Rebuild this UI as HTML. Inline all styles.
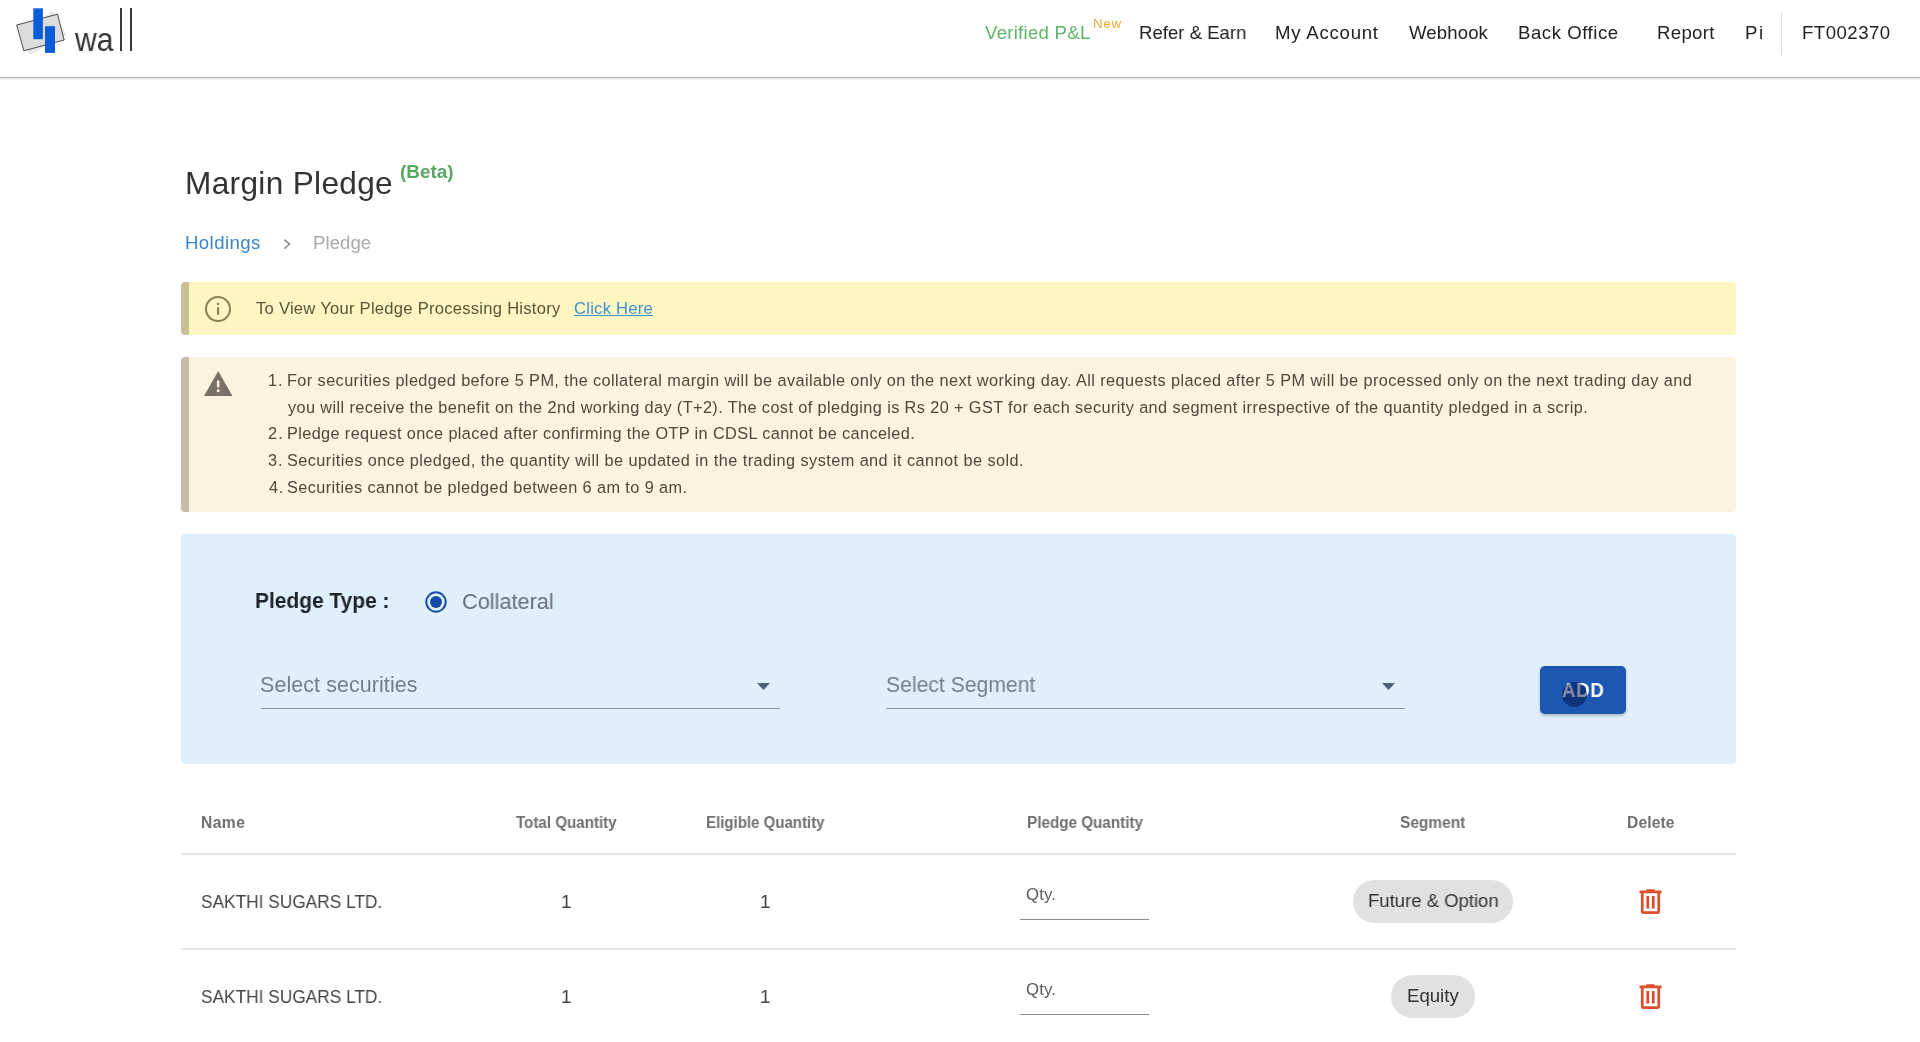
<!DOCTYPE html>
<html lang="en">
<head>
<meta charset="utf-8">
<title>Margin Pledge</title>
<style>
html,body{margin:0;padding:0;background:#fff;}
body{width:1920px;height:1042px;position:relative;overflow:hidden;font-family:"Liberation Sans",sans-serif;}
.t{will-change:transform;position:absolute;white-space:nowrap;line-height:1;transform-origin:0 0;margin:0;padding:0;font-weight:400;font-style:normal;text-decoration:none;display:block;}
h1.t{font-weight:400;}
.s{display:inline-block;width:0;height:50px;}
.abs{position:absolute;display:block;}
.bar{position:absolute;display:block;}
.hdr{position:absolute;left:0;top:0;width:1920px;height:77px;background:#fff;border-bottom:1px solid #b2b2b2;box-shadow:0 1px 2px rgba(0,0,0,.12);}
.logo{position:absolute;left:0;top:0;}
.alert{position:absolute;left:181px;width:1547px;border-radius:4px;border-left:8px solid;}
.a1{top:282px;height:53px;background:#fef6c2;border-left-color:#c9c294;}
.a2{top:357px;height:155px;background:#fdf1df;border-left-color:#c8bcad;}
.panel{position:absolute;left:181px;top:533.5px;width:1555px;height:230px;background:#e0effc;border-radius:4px;}
.btn{position:absolute;left:1540px;top:666px;width:86px;height:48px;border:0;padding:0;border-radius:5px;background:#1c57b1;box-shadow:0 2px 3px rgba(0,0,0,.22);}
.chip{position:absolute;display:block;border-radius:22px;background:#e1e1e1;}
</style>
</head>
<body>
<header class="hdr">
<svg class="logo" width="70" height="60" viewBox="0 0 70 60">
<polygon points="52,10 66.5,35 30,55 22,42" fill="#e9e9e9"/>
<polygon points="16.7,25 57.5,14.2 64.2,40 23.8,50.8" fill="#dcdcdc" stroke="#4a4a4a" stroke-width="1"/>
<rect x="33.3" y="8.3" width="9.6" height="30.9" fill="#0b5cd9"/>
<rect x="45" y="26.2" width="10" height="26.7" fill="#0b5cd9"/>
</svg>
<span class="t thin" style="left:75.40px;top:1.00px;font-size:34.00px;color:#333;transform:scaleX(0.8858);"><i class="s"></i>wa</span>
<i class="bar" style="left:120.1px;top:8.3px;width:2.2px;height:42.5px;background:#3a3a3a"></i>
<i class="bar" style="left:129.8px;top:8.3px;width:2.2px;height:42.5px;background:#3a3a3a"></i>
<nav>
<a class="t" style="left:984.56px;top:-11.00px;font-size:18.60px;color:#5fb565;letter-spacing:0.264px;transform:scaleX(1.0000);"><i class="s"></i>Verified P&amp;L</a>
<a class="t" style="left:1138.51px;top:-11.00px;font-size:18.60px;color:#222;transform:scaleX(0.9980);"><i class="s"></i>Refer &amp; Earn</a>
<a class="t" style="left:1274.91px;top:-11.00px;font-size:18.60px;color:#222;letter-spacing:0.768px;transform:scaleX(1.0000);"><i class="s"></i>My Account</a>
<a class="t" style="left:1408.71px;top:-11.00px;font-size:18.60px;color:#222;letter-spacing:0.113px;transform:scaleX(1.0000);"><i class="s"></i>Webhook</a>
<a class="t" style="left:1517.81px;top:-11.00px;font-size:18.60px;color:#222;letter-spacing:0.546px;transform:scaleX(1.0000);"><i class="s"></i>Back Office</a>
<a class="t" style="left:1657.01px;top:-11.00px;font-size:18.60px;color:#222;letter-spacing:0.336px;transform:scaleX(1.0000);"><i class="s"></i>Report</a>
<a class="t" style="left:1744.51px;top:-11.00px;font-size:18.60px;color:#222;letter-spacing:1.536px;transform:scaleX(1.0000);"><i class="s"></i>Pi</a>
<a class="t" style="left:1802.11px;top:-11.00px;font-size:18.60px;color:#222;letter-spacing:0.489px;transform:scaleX(1.0000);"><i class="s"></i>FT002370</a>
<sup class="t" style="left:1092.83px;top:-22.00px;font-size:13.40px;color:#f3a632;letter-spacing:0.652px;transform:scaleX(1.0000);"><i class="s"></i>New</sup>
<i class="bar" style="left:1781px;top:13px;width:1px;height:42px;background:#dcdcdc"></i>
</nav>
</header>
<main>
<h1 class="t" style="left:184.72px;top:144.00px;font-size:31.60px;color:#333;letter-spacing:0.328px;transform:scaleX(1.0000);"><i class="s"></i>Margin Pledge</h1>
<sup class="t" style="left:399.66px;top:128.00px;font-size:18.90px;color:#58a960;font-weight:700;transform:scaleX(0.9963);"><i class="s"></i>(Beta)</sup>
<a class="t" style="left:185.01px;top:199.00px;font-size:18.60px;color:#3b86c6;letter-spacing:0.412px;transform:scaleX(1.0000);"><i class="s"></i>Holdings</a>
<svg class="abs" style="left:282px;top:237px" width="11" height="14" viewBox="0 0 11 14"><path d="M2.2 2.6 L7.6 7.1 L2.2 11.6" fill="none" stroke="#8a8a8a" stroke-width="1.5"/></svg>
<span class="t" style="left:312.91px;top:199.00px;font-size:18.60px;color:#aaaaaa;letter-spacing:0.057px;transform:scaleX(1.0000);"><i class="s"></i>Pledge</span>
<section class="alert a1">
</section>
<svg class="abs" style="left:203px;top:294px" width="30" height="30" viewBox="0 0 30 30"><circle cx="15" cy="15" r="12" fill="none" stroke="#8b7f52" stroke-width="2"/><rect x="14" y="13.2" width="2.1" height="7.6" fill="#8b7f52"/><rect x="14" y="8.8" width="2.1" height="2.3" fill="#8b7f52"/></svg>
<span class="t" style="left:255.67px;top:264.00px;font-size:16.60px;color:#5b5433;letter-spacing:0.255px;transform:scaleX(1.0000);"><i class="s"></i>To View Your Pledge Processing History</span>
<a class="t" style="left:573.77px;top:264.00px;font-size:16.60px;color:#3d90d2;letter-spacing:0.250px;transform:scaleX(1.0000);text-decoration:underline;"><i class="s"></i>Click Here</a>
<section class="alert a2">
</section>
<svg class="abs" style="left:203.7px;top:370.8px" width="28.4" height="25" viewBox="0 0 28.4 25"><path d="M14.2 0 L28.4 25 L0 25 Z" fill="#7a7166"/><rect x="12.9" y="9.5" width="2.6" height="6.8" fill="#fdf1df"/><rect x="12.9" y="18.4" width="2.6" height="2.7" fill="#fdf1df"/></svg>
<span class="t" style="left:268.38px;top:336.00px;font-size:16.30px;color:#4e483d;letter-spacing:0.960px;transform:scaleX(1.0000);"><i class="s"></i>1.</span>
<span class="t" style="left:286.50px;top:336.00px;font-size:16.30px;color:#4e483d;letter-spacing:0.411px;transform:scaleX(1.0000);"><i class="s"></i>For securities pledged before 5 PM, the collateral margin will be available only on the next working day. All requests placed after 5 PM will be processed only on the next trading day and</span>
<span class="t" style="left:287.72px;top:363.00px;font-size:16.30px;color:#4e483d;letter-spacing:0.394px;transform:scaleX(1.0000);"><i class="s"></i>you will receive the benefit on the 2nd working day (T+2). The cost of pledging is Rs 20 + GST for each security and segment irrespective of the quantity pledged in a scrip.</span>
<span class="t" style="left:268.19px;top:389.00px;font-size:16.30px;color:#4e483d;letter-spacing:1.153px;transform:scaleX(1.0000);"><i class="s"></i>2.</span>
<span class="t" style="left:286.50px;top:389.00px;font-size:16.30px;color:#4e483d;letter-spacing:0.378px;transform:scaleX(1.0000);"><i class="s"></i>Pledge request once placed after confirming the OTP in CDSL cannot be canceled.</span>
<span class="t" style="left:268.35px;top:416.00px;font-size:16.30px;color:#4e483d;letter-spacing:0.990px;transform:scaleX(1.0000);"><i class="s"></i>3.</span>
<span class="t" style="left:287.07px;top:416.00px;font-size:16.30px;color:#4e483d;letter-spacing:0.437px;transform:scaleX(1.0000);"><i class="s"></i>Securities once pledged, the quantity will be updated in the trading system and it cannot be sold.</span>
<span class="t" style="left:268.67px;top:443.00px;font-size:16.30px;color:#4e483d;letter-spacing:0.664px;transform:scaleX(1.0000);"><i class="s"></i>4.</span>
<span class="t" style="left:287.07px;top:443.00px;font-size:16.30px;color:#4e483d;letter-spacing:0.406px;transform:scaleX(1.0000);"><i class="s"></i>Securities cannot be pledged between 6 am to 9 am.</span>
<section class="panel"></section>
<span class="t" style="left:254.54px;top:558.00px;font-size:22.00px;color:#1d2329;font-weight:700;transform:scaleX(0.9512);"><i class="s"></i>Pledge Type :</span>
<svg class="abs" style="left:423.7px;top:590.4px" width="24" height="24" viewBox="0 0 24 24"><circle cx="12" cy="12" r="9.7" fill="none" stroke="#164ba8" stroke-width="2"/><circle cx="12" cy="12" r="6" fill="#164ba8"/></svg>
<span class="t" style="left:462.41px;top:559.00px;font-size:22.00px;color:#66717c;transform:scaleX(0.9866);"><i class="s"></i>Collateral</span>
<span class="t" style="left:260.24px;top:642.00px;font-size:21.40px;color:#73808c;letter-spacing:0.108px;transform:scaleX(1.0000);"><i class="s"></i>Select securities</span>
<i class="bar" style="left:261px;top:707.5px;width:518.8px;height:1.2px;background:#8597a8"></i>
<svg class="abs" style="left:756.5px;top:683px" width="13" height="7" viewBox="0 0 13 7"><path d="M0 0 L13 0 L6.5 7 Z" fill="#4f6178"/></svg>
<span class="t" style="left:885.75px;top:642.00px;font-size:21.40px;color:#73808c;transform:scaleX(0.9886);"><i class="s"></i>Select Segment</span>
<i class="bar" style="left:886px;top:707.5px;width:518.8px;height:1.2px;background:#8597a8"></i>
<svg class="abs" style="left:1381.9px;top:683px" width="13" height="7" viewBox="0 0 13 7"><path d="M0 0 L13 0 L6.5 7 Z" fill="#4f6178"/></svg>
<button class="btn"></button>
<span class="t" style="left:1562.23px;top:647.00px;font-size:19.40px;color:#ffffff;font-weight:700;letter-spacing:0.724px;transform:scaleX(0.9600);"><i class="s"></i>ADD</span>
<i class="bar" style="left:1561.6px;top:682px;width:25px;height:25px;border-radius:50%;background:rgba(0,16,64,.48)"></i>
<b class="t" style="left:201.09px;top:778.00px;font-size:15.60px;color:#707070;font-weight:700;letter-spacing:0.450px;transform:scaleX(1.0000);"><i class="s"></i>Name</b>
<b class="t" style="left:516.35px;top:778.00px;font-size:15.60px;color:#707070;font-weight:700;transform:scaleX(0.9707);"><i class="s"></i>Total Quantity</b>
<b class="t" style="left:706.02px;top:778.00px;font-size:15.60px;color:#707070;font-weight:700;transform:scaleX(0.9632);"><i class="s"></i>Eligible Quantity</b>
<b class="t" style="left:1026.51px;top:778.00px;font-size:15.60px;color:#707070;font-weight:700;transform:scaleX(0.9777);"><i class="s"></i>Pledge Quantity</b>
<b class="t" style="left:1400.34px;top:778.00px;font-size:15.60px;color:#707070;font-weight:700;transform:scaleX(0.9907);"><i class="s"></i>Segment</b>
<b class="t" style="left:1626.89px;top:778.00px;font-size:15.60px;color:#707070;font-weight:700;letter-spacing:0.122px;transform:scaleX(1.0000);"><i class="s"></i>Delete</b>
<i class="bar" style="left:181px;top:853.4px;width:1555px;height:1.4px;background:#e6e6e6"></i>
<i class="bar" style="left:181px;top:948.4px;width:1555px;height:1.4px;background:#e6e6e6"></i>
<span class="t" style="left:201.32px;top:858.00px;font-size:18.60px;color:#444;transform:scaleX(0.9298);"><i class="s"></i>SAKTHI SUGARS LTD.</span>
<span class="t" style="left:560.59px;top:858.00px;font-size:18.60px;color:#444;transform:scaleX(1.0135);"><i class="s"></i>1</span>
<span class="t" style="left:759.59px;top:858.00px;font-size:18.60px;color:#444;transform:scaleX(1.0135);"><i class="s"></i>1</span>
<span class="t" style="left:1025.84px;top:850.00px;font-size:16.80px;color:#5a5a5a;letter-spacing:0.128px;transform:scaleX(1.0000);"><i class="s"></i>Qty.</span>
<i class="bar" style="left:1020.4px;top:919.0px;width:128.6px;height:1.2px;background:#8c8c8c"></i>
<i class="chip" style="left:1352.5px;top:880.0px;width:160.8px;height:43px"></i>
<span class="t" style="left:1367.52px;top:857.00px;font-size:18.60px;color:#333;transform:scaleX(0.9952);"><i class="s"></i>Future &amp; Option</span>
<svg class="abs" style="left:1633.9px;top:884.9px" width="33" height="33" viewBox="0 0 24 24"><path d="M9,3V4H4V6H5V19A2,2 0 0,0 7,21H17A2,2 0 0,0 19,19V6H20V4H15V3H9M7,6H17V19H7V6M9,8V17H11V8H9M13,8V17H15V8H13Z" fill="#dc502e"/></svg>
<span class="t" style="left:201.32px;top:953.00px;font-size:18.60px;color:#444;transform:scaleX(0.9298);"><i class="s"></i>SAKTHI SUGARS LTD.</span>
<span class="t" style="left:560.59px;top:953.00px;font-size:18.60px;color:#444;transform:scaleX(1.0135);"><i class="s"></i>1</span>
<span class="t" style="left:759.59px;top:953.00px;font-size:18.60px;color:#444;transform:scaleX(1.0135);"><i class="s"></i>1</span>
<span class="t" style="left:1025.84px;top:945.00px;font-size:16.80px;color:#5a5a5a;letter-spacing:0.128px;transform:scaleX(1.0000);"><i class="s"></i>Qty.</span>
<i class="bar" style="left:1020.4px;top:1014.1px;width:128.6px;height:1.2px;background:#8c8c8c"></i>
<i class="chip" style="left:1391.3px;top:975.1px;width:83.5px;height:43px"></i>
<span class="t" style="left:1406.52px;top:952.00px;font-size:18.60px;color:#333;transform:scaleX(0.9956);"><i class="s"></i>Equity</span>
<svg class="abs" style="left:1633.9px;top:980.0px" width="33" height="33" viewBox="0 0 24 24"><path d="M9,3V4H4V6H5V19A2,2 0 0,0 7,21H17A2,2 0 0,0 19,19V6H20V4H15V3H9M7,6H17V19H7V6M9,8V17H11V8H9M13,8V17H15V8H13Z" fill="#dc502e"/></svg>
</main>
</body>
</html>
